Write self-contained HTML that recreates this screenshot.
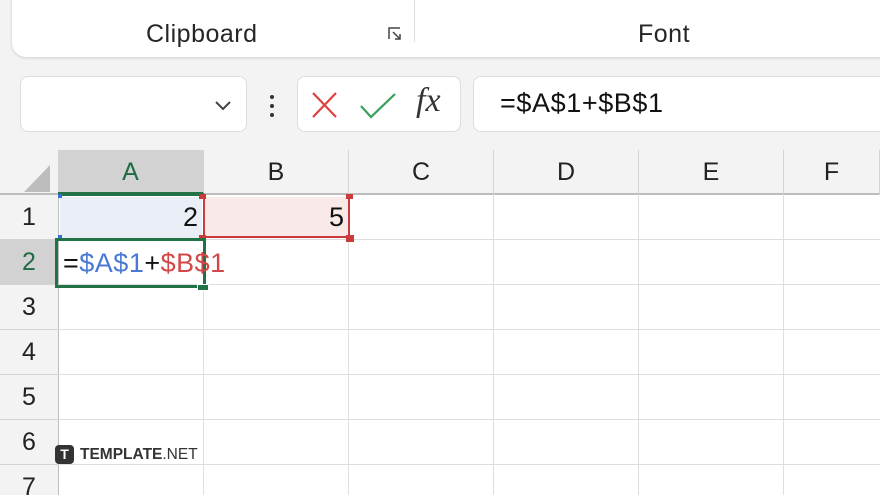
<!DOCTYPE html><html><head><style>
*{margin:0;padding:0;box-sizing:border-box}
html,body{width:880px;height:495px;overflow:hidden}
body{background:#f3f3f3;font-family:"Liberation Sans",sans-serif;position:relative}
.a{position:absolute}
.ch{position:absolute;top:150px;height:45px;border-right:1px solid #d4d4d4;font-size:25px;color:#222;text-align:center;line-height:45px}
.rh{position:absolute;left:0;width:58px;height:45px;border-bottom:1px solid #d4d4d4;font-size:25px;color:#222;text-align:center;line-height:45px;background:#f3f3f3}
.vl{position:absolute;top:195px;height:300px;width:1px;background:#dedede}
.hl{position:absolute;left:58px;right:0;height:1px;background:#dedede}
</style></head><body>
<div class="a" style="left:12px;top:-10px;width:880px;height:67px;background:#fff;border-radius:0 0 0 14px;box-shadow:0 1px 3px rgba(0,0,0,.15)"></div>
<div class="a" style="left:414px;top:0;width:1px;height:42px;background:#ddd"></div>
<div class="a" style="left:146px;top:20px;font-size:25px;color:#262626;letter-spacing:0.5px">Clipboard</div>
<div class="a" style="left:638px;top:20px;font-size:25px;color:#262626;letter-spacing:0.5px">Font</div>
<svg class="a" style="left:388px;top:27px" width="14" height="14"><path d="M1 12V1h11M5 5l7 7M7 12h5V7" stroke="#444" stroke-width="1.5" fill="none"/></svg>
<div class="a" style="left:20px;top:76px;width:227px;height:56px;background:#fff;border:1px solid #ddd;border-radius:8px"></div>
<svg class="a" style="left:214px;top:100px" width="18" height="12"><path d="M2 2l7 7 7-7" stroke="#444" stroke-width="2" fill="none"/></svg>
<div class="a" style="left:270px;top:95px;width:4px;height:4px;background:#333;border-radius:2px"></div>
<div class="a" style="left:270px;top:104px;width:4px;height:4px;background:#333;border-radius:2px"></div>
<div class="a" style="left:270px;top:113px;width:4px;height:4px;background:#333;border-radius:2px"></div>
<div class="a" style="left:297px;top:76px;width:164px;height:56px;background:#fff;border:1px solid #ddd;border-radius:8px"></div>
<svg class="a" style="left:310px;top:90px" width="30" height="30"><path d="M3 3l23 24M26 3L3 27" stroke="#e04040" stroke-width="2.2" fill="none"/></svg>
<svg class="a" style="left:358px;top:92px" width="40" height="28"><path d="M3 14l10 11L37 2" stroke="#3aa05a" stroke-width="2.2" fill="none"/></svg>
<div class="a" style="left:416px;top:82px;font-family:'Liberation Serif',serif;font-style:italic;font-size:34px;color:#333">fx</div>
<div class="a" style="left:473px;top:76px;width:420px;height:56px;background:#fff;border:1px solid #ddd;border-radius:8px"></div>
<div class="a" style="left:500px;top:88px;font-size:27px;color:#111;letter-spacing:0.6px">=$A$1+$B$1</div>
<div class="a" style="left:0;top:150px;width:880px;height:345px;background:#fff"></div>
<div class="a" style="left:0;top:150px;width:880px;height:45px;background:#f3f3f3;border-bottom:2px solid #bdbdbd"></div>
<svg class="a" style="left:22px;top:165px" width="30" height="30"><path d="M28 0V27H2z" fill="#bdbdbd"/></svg>
<div class="ch" style="left:58px;width:146px;background:#d2d2d2;color:#1f6b43;border-bottom:3px solid #217346">A</div>
<div class="ch" style="left:204px;width:145px">B</div>
<div class="ch" style="left:349px;width:145px">C</div>
<div class="ch" style="left:494px;width:145px">D</div>
<div class="ch" style="left:639px;width:145px">E</div>
<div class="ch" style="left:784px;width:96px">F</div>
<div class="a" style="left:57px;top:195px;width:2px;height:300px;background:#bdbdbd"></div>
<div class="rh" style="top:195px">1</div>
<div class="rh" style="top:240px;background:#d2d2d2;color:#1f6b43">2</div>
<div class="rh" style="top:285px">3</div>
<div class="rh" style="top:330px">4</div>
<div class="rh" style="top:375px">5</div>
<div class="rh" style="top:420px">6</div>
<div class="rh" style="top:465px">7</div>
<div class="vl" style="left:203px"></div><div class="vl" style="left:348px"></div><div class="vl" style="left:493px"></div><div class="vl" style="left:638px"></div><div class="vl" style="left:783px"></div>
<div class="hl" style="top:239px"></div><div class="hl" style="top:284px"></div><div class="hl" style="top:329px"></div><div class="hl" style="top:374px"></div><div class="hl" style="top:419px"></div><div class="hl" style="top:464px"></div>
<div class="a" style="left:60px;top:197px;width:142px;height:41px;background:#e9eef7;text-align:right;font-size:27px;line-height:41px;padding-right:4px;color:#111">2</div>
<div class="a" style="left:58px;top:193px;width:146px;height:3px;background:#217346"></div>
<div class="a" style="left:58px;top:194px;width:4px;height:4px;background:#3b6fd1"></div>
<div class="a" style="left:58px;top:235px;width:4px;height:4px;background:#3b6fd1"></div>
<div class="a" style="left:203px;top:197px;width:147px;height:41px;background:#f9e9e9;border:2px solid #cc3b3b;border-top:none;text-align:right;font-size:27px;line-height:41px;padding-right:4px;color:#111">5</div>
<div class="a" style="left:199px;top:194px;width:7px;height:5px;background:#cc3b3b"></div>
<div class="a" style="left:346px;top:194px;width:7px;height:5px;background:#cc3b3b"></div>
<div class="a" style="left:199px;top:235px;width:7px;height:5px;background:#cc3b3b"></div>
<div class="a" style="left:346px;top:235px;width:8px;height:7px;background:#cc3b3b"></div>
<div class="a" style="left:55px;top:238px;width:151px;height:50px;border:3px solid #217346"></div>
<div class="a" style="left:197px;top:284px;width:12px;height:7px;background:#217346;border:1px solid #fff"></div>
<div class="a" style="left:63px;top:248px;font-size:27px;color:#111;letter-spacing:0.5px">=<span style="color:#4a78d8">$A$1</span>+<span style="color:#d24848">$B$1</span></div>
<div class="a" style="left:55px;top:445px;width:19px;height:19px;background:#333;border-radius:4px;color:#fff;font-weight:bold;font-size:14px;text-align:center;line-height:19px">T</div>
<div class="a" style="left:80px;top:446px;font-size:15.5px;color:#333"><b>TEMPLATE</b>.NET</div>
</body></html>
